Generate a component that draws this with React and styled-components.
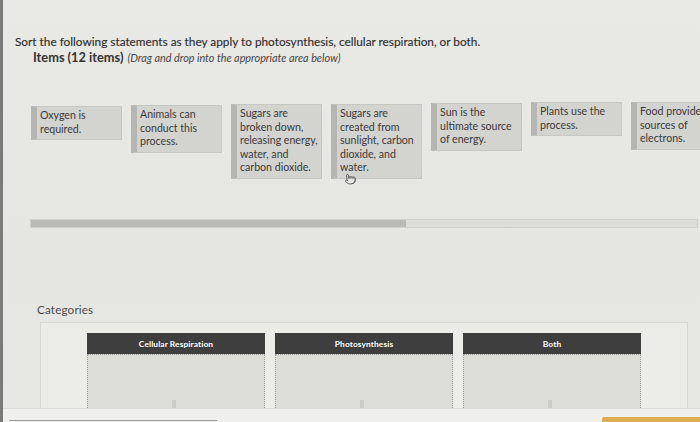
import React from "react";
import styled, { createGlobalStyle } from "styled-components";
import { Pointer } from "lucide-react";

const Global = createGlobalStyle`
  html, body { margin: 0; padding: 0; background: #e7e7e4; }
  * { box-sizing: border-box; }
`;

const Page = styled.div`
  position: relative;
  width: 700px;
  height: 422px;
  overflow: hidden;
  background: linear-gradient(180deg, #e9e9e6 0%, #e5e5e2 60%, #e7e7e4 100%);
  border-left: 3px solid #7a7a78;
  font-family: Lato, "Open Sans", sans-serif;
  color: #333;
`;

const Header = styled.div`
  height: 66px;
  padding: 34px 0 0 12px;
`;

const Title = styled.div`
  font-size: 11.8px;
  line-height: 15px;
  color: #2e2e2e;
  white-space: nowrap;
  -webkit-text-stroke: 0.15px #2e2e2e;
`;

const Sub = styled.div`
  margin-top: 0;
  padding-left: 18px;
  font-size: 12.8px;
  line-height: 16px;
  white-space: nowrap;
  b { font-weight: 700; color: #333; }
  i { font-size: 10.8px; color: #444; margin-left: 4px; }
`;

const Items = styled.div`
  display: flex;
  align-items: flex-start;
  gap: 9px;
  height: 114px;
  padding: 36px 0 0 28px;
  white-space: nowrap;
`;

const Card = styled.div`
  position: relative;
  flex: 0 0 91px;
  width: 91px;
  margin-top: ${(p) => p.$dy}px;
  background: #d3d3d0;
  border: 1px solid #c6c6c3;
  border-left: 6px solid #b5b5b2;
  padding: 2px 0 3px 3px;
  font-size: 10.6px;
  line-height: 13.5px;
  color: #3a3a3a;
  overflow: visible;
`;

const Line = styled.div`
  white-space: nowrap;
`;

const ProgressWrap = styled.div`
  padding-top: ${(p) => p.$top}px;
`;

const Progress = styled.div`
  display: flex;
  margin: 0 0 0 27px;
  width: 668px;
  height: 9px;
  background: #dcdcd9;
  border: 1px solid #cfcfcc;
`;

const Fill = styled.div`
  height: 100%;
  background: #b9b9b6;
`;

const CatLabel = styled.div`
  margin: 75px 0 0 34px;
  font-size: 11.6px;
  line-height: 14px;
  color: #4a4a4a;
  letter-spacing: 0.2px;
`;

const CatBox = styled.div`
  display: flex;
  gap: 10px;
  margin: 5px 0 0 37px;
  width: 648px;
  height: 86px;
  padding: 10px 0 0 46px;
  background: #ebebe8;
  border: 1px solid #d6d6d3;
  border-bottom: none;
  overflow: hidden;
`;

const Column = styled.div`
  display: flex;
  flex-direction: column;
  width: 178px;
  flex: 0 0 178px;
`;

const ColHead = styled.div`
  height: 21px;
  background: #3e3e3e;
  color: #fff;
  font-size: 8.4px;
  font-weight: 700;
  display: flex;
  align-items: center;
  justify-content: center;
  letter-spacing: 0.1px;
`;

const Drop = styled.div`
  position: relative;
  flex: 1;
  background: #dcdcd9;
  border: 1px dotted #9a9a98;
  border-bottom: none;
`;

const Notch = styled.div`
  position: absolute;
  bottom: 0;
  left: 50%;
  width: 4px;
  height: 8px;
  margin-left: -4px;
  background: #cacac7;
`;

const Footer = styled.div`
  position: relative;
  height: 20px;
  background: #efefed;
  border-top: 1px solid #dededb;
`;

const FootLine = styled.div`
  position: absolute;
  left: 6px;
  top: 11px;
  width: 208px;
  height: 1px;
  background: #9c9c9a;
`;

const Orange = styled.div`
  position: absolute;
  right: 0;
  top: 8px;
  width: 98px;
  height: 6px;
  background: #dcae4f;
  border-radius: 2px 0 0 0;
`;

const Cursor = styled.div`
  position: absolute;
  left: 341px;
  top: 169px;
  color: #555;
  transform: rotate(-10deg);
`;

const cards = [
  { l: ["Oxygen is", "required."], dy: 4 },
  { l: ["Animals can", "conduct this", "process."], dy: 3 },
  { l: ["Sugars are", "broken down,", "releasing energy,", "water, and", "carbon dioxide."], dy: 2 },
  { l: ["Sugars are", "created from", "sunlight, carbon", "dioxide, and", "water."], dy: 2 },
  { l: ["Sun is the", "ultimate source", "of energy."], dy: 1 },
  { l: ["Plants use the", "process."], dy: 0 },
  { l: ["Food provides", "sources of", "electrons."], dy: 0 },
];

export default function App() {
  return (
    <>
      <Global />
      <Page>
        <Header>
          <Title>
            Sort the following statements as they apply to photosynthesis, cellular respiration, or both.
          </Title>
          <Sub>
            <b>Items (12 items)</b>
            <i>(Drag and drop into the appropriate area below)</i>
          </Sub>
        </Header>
        <Items>
          {cards.map((c, i) => (
            <Card key={i} $dy={c.dy}>
              {c.l.map((t, j) => (
                <Line key={j}>{t}</Line>
              ))}
            </Card>
          ))}
        </Items>
        <ProgressWrap $top={39}>
          <Progress>
            <Fill style={{ width: `${(376 / 668) * 100}%` }} />
          </Progress>
        </ProgressWrap>
        <CatLabel>Categories</CatLabel>
        <CatBox>
          {["Cellular Respiration", "Photosynthesis", "Both"].map((h) => (
            <Column key={h}>
              <ColHead>{h}</ColHead>
              <Drop>
                <Notch />
              </Drop>
            </Column>
          ))}
        </CatBox>
        <Footer>
          <FootLine />
          <Orange />
        </Footer>
        <Cursor>
          <Pointer size={12} strokeWidth={1.6} />
        </Cursor>
      </Page>
    </>
  );
}
